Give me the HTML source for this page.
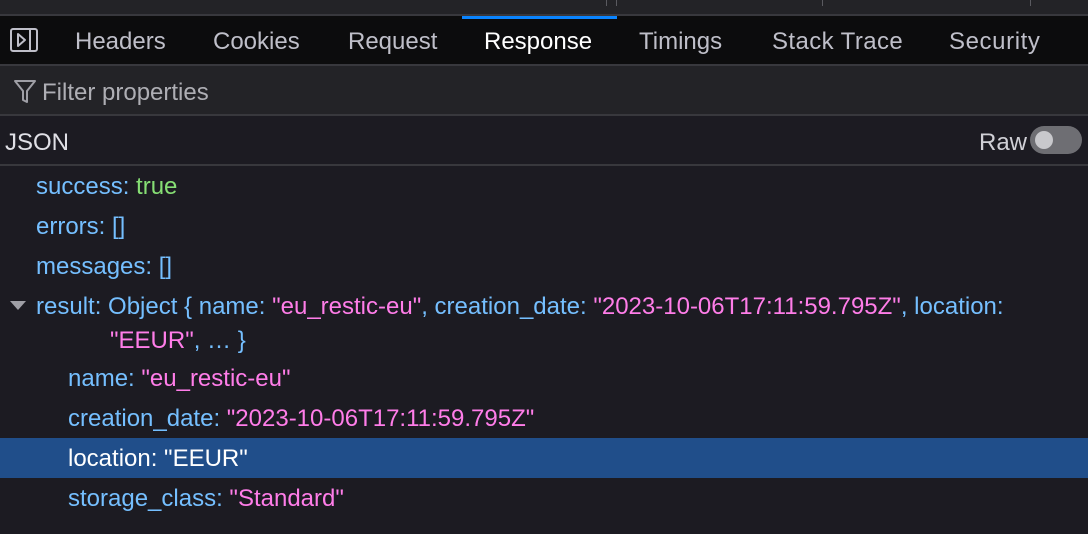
<!DOCTYPE html>
<html><head><meta charset="utf-8"><style>
*{margin:0;padding:0;box-sizing:border-box}
body{width:1088px;height:534px;overflow:hidden;background:#1c1b22;font-family:"Liberation Sans",Arial,sans-serif;font-size:24px;color:#fbfbfe;position:relative}
.top{position:absolute;left:0;top:0;width:1088px;height:14px;background:#232327}
.top i{position:absolute;top:0;width:1px;height:6px;background:#5a5a60}
.b{position:absolute;left:0;width:1088px;height:2px;background:#38383d}
.tabs{position:absolute;left:0;top:16px;width:1088px;height:48px;background:#0c0c0d}
.tab{position:absolute;top:12px;color:#bfbfc9}
.act{color:#fff}
.ul{position:absolute;left:462px;top:16px;width:155px;height:3px;background:#0a84ff}
.filter{position:absolute;left:0;top:66px;width:1088px;height:48px;background:#232327}
.json{position:absolute;left:0;top:116px;width:1088px;height:48px;background:#1c1b22}
.row{position:absolute;height:40px;line-height:40px;white-space:nowrap}
.k{color:#75bfff}.s{color:#ff7de9}.t{color:#86de74}
.hl{position:absolute;left:0;top:438px;width:1088px;height:40px;background:#204e8a}
</style></head><body>
<div class="top"><i style="left:606px"></i><i style="left:616px"></i><i style="left:822px"></i><i style="left:1030px"></i></div>
<div class="b" style="top:14px"></div>
<div class="tabs">
<svg style="position:absolute;left:10px;top:12px" width="28" height="24" viewBox="0 0 28 24"><rect x="1" y="1" width="26" height="22" rx="2" fill="none" stroke="#bfbfc9" stroke-width="2"/><line x1="20" y1="1" x2="20" y2="23" stroke="#bfbfc9" stroke-width="2"/><path d="M8 6 L15 12 L8 18 Z" fill="none" stroke="#bfbfc9" stroke-width="2" stroke-linejoin="round"/></svg>
<span class="tab" style="left:75px">Headers</span>
<span class="tab" style="left:213px">Cookies</span>
<span class="tab" style="left:348px">Request</span>
<span class="tab act" style="left:484px">Response</span>
<span class="tab" style="left:639px">Timings</span>
<span class="tab" style="left:772px;letter-spacing:0.4px">Stack Trace</span>
<span class="tab" style="left:949px;letter-spacing:0.6px">Security</span>
</div>
<div class="ul"></div>
<div class="b" style="top:64px"></div>
<div class="filter">
<svg style="position:absolute;left:13px;top:13px" width="24" height="26" viewBox="0 0 24 26"><path d="M2 2 H22 L14 12 V23 L10 21 V12 Z" fill="none" stroke="#9f9fa6" stroke-width="2" stroke-linejoin="round"/></svg>
<span style="position:absolute;left:42px;top:13px;color:#aeaeb4">Filter properties</span>
</div>
<div class="b" style="top:114px"></div>
<div class="json">
<span style="position:absolute;left:5px;top:13px;color:#e0e0e6">JSON</span>
<span style="position:absolute;left:979px;top:13px;color:#d0d0d6">Raw</span>
<div style="position:absolute;left:1030px;top:10px;width:52px;height:28px;border-radius:14px;background:#6e6e73"><div style="position:absolute;left:5px;top:5px;width:18px;height:18px;border-radius:9px;background:#c8c8cc"></div></div>
</div>
<div class="b" style="top:164px"></div>
<div class="hl"></div>
<div class="row" style="left:36px;top:167px"><span class="k">success: </span><span class="t">true</span></div>
<div class="row" style="left:36px;top:207px"><span class="k">errors: []</span></div>
<div class="row" style="left:36px;top:247px"><span class="k">messages: []</span></div>
<svg style="position:absolute;left:10px;top:301px" width="16" height="10" viewBox="0 0 16 10"><path d="M0 0 H16 L8 9 Z" fill="#9f9fa6"/></svg>
<div class="row" style="left:36px;top:287px"><span class="k">result: Object { name: </span><span class="s">"eu_restic-eu"</span><span class="k">, creation_date: </span><span class="s">"2023-10-06T17:11:59.795Z"</span><span class="k">, location:</span></div>
<div class="row" style="left:110px;top:321px"><span class="s">"EEUR"</span><span class="k">, … }</span></div>
<div class="row" style="left:68px;top:359px"><span class="k">name: </span><span class="s">"eu_restic-eu"</span></div>
<div class="row" style="left:68px;top:399px"><span class="k">creation_date: </span><span class="s">"2023-10-06T17:11:59.795Z"</span></div>
<div class="row" style="left:68px;top:439px;color:#fff">location: "EEUR"</div>
<div class="row" style="left:68px;top:479px"><span class="k">storage_class: </span><span class="s">"Standard"</span></div>
</body></html>
